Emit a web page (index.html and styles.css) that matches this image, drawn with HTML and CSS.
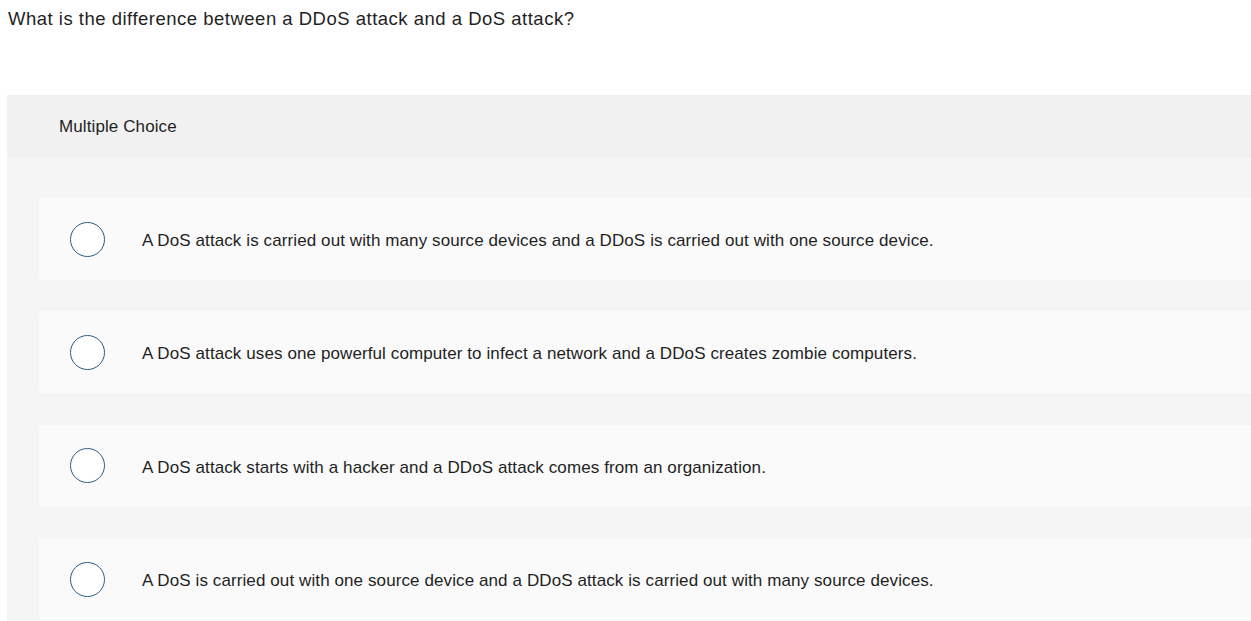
FILE: index.html
```html
<!DOCTYPE html>
<html>
<head>
<meta charset="utf-8">
<link rel="stylesheet" href="styles.css">
</head>
<body>
<div class="page">
  <p class="question">What is the difference between a DDoS attack and a DoS attack?</p>
  <div class="panel">
    <div class="panel-head">Multiple Choice</div>
    <div class="options">
      <div class="option"><span class="radio"></span><span class="label">A DoS attack is carried out with many source devices and a DDoS is carried out with one source device.</span></div>
      <div class="option"><span class="radio"></span><span class="label">A DoS attack uses one powerful computer to infect a network and a DDoS creates zombie computers.</span></div>
      <div class="option"><span class="radio"></span><span class="label">A DoS attack starts with a hacker and a DDoS attack comes from an organization.</span></div>
      <div class="option"><span class="radio"></span><span class="label">A DoS is carried out with one source device and a DDoS attack is carried out with many source devices.</span></div>
    </div>
  </div>
</div>
</body>
</html>
```
FILE: styles.css
```css
html, body {
  margin: 0;
  padding: 0;
  background: #ffffff;
  overflow: hidden;
}
.page {
  width: 1251px;
  height: 621px;
  overflow: hidden;
  font-family: "Liberation Sans", Arial, sans-serif;
  color: #1f1f1f;
}
.question {
  margin: 0;
  padding: 7px 0 0 8px;
  height: 95px;
  box-sizing: border-box;
  font-size: 18.5px;
  letter-spacing: 0.5px;
  line-height: 24px;
}
.panel {
  margin-left: 7px;
  width: 1270px;
  background: #f5f5f5;
  padding-bottom: 40px;
}
.panel-head {
  background: #f1f1f1;
  height: 63px;
  box-sizing: border-box;
  padding: 22px 0 0 52px;
  font-size: 17px;
  letter-spacing: 0.1px;
  line-height: 20px;
}
.options {
  padding: 40px 0 0 32px;
  display: flex;
  flex-direction: column;
  gap: 31.4px;
}
.option {
  background: #fafafa;
  border-radius: 3px;
  height: 82px;
  display: flex;
  align-items: center;
  padding-left: 31px;
}
.radio {
  width: 33px;
  height: 33px;
  border: 1.5px solid #2d5b88;
  border-radius: 50%;
  background: #fff;
  flex: none;
}
.label {
  margin-left: 37px;
  padding-top: 4px;
  font-size: 17px;
  letter-spacing: 0.1px;
  line-height: 20px;
}
```
